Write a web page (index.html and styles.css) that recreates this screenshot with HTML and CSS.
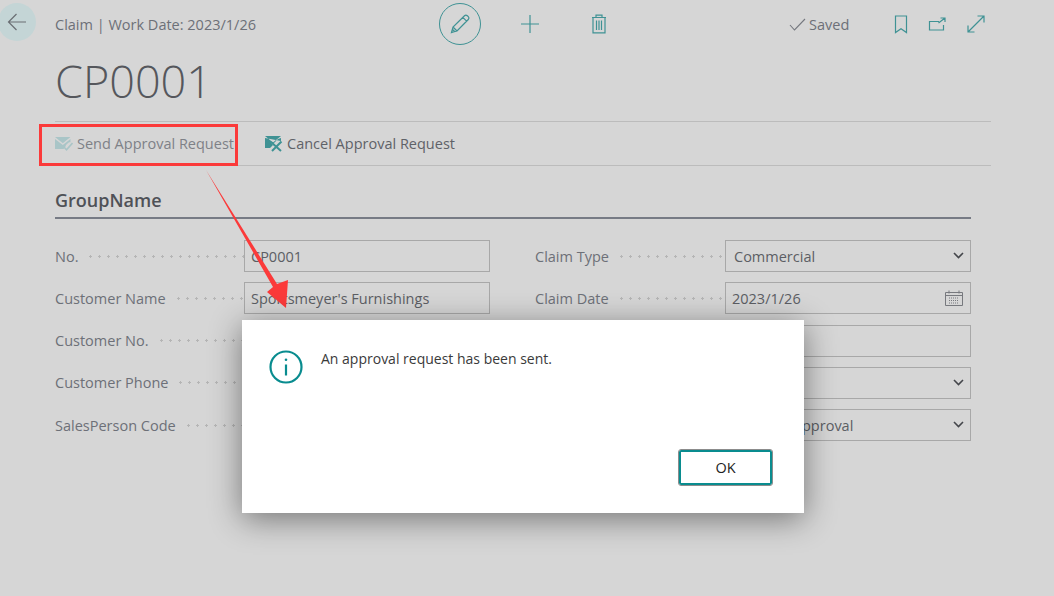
FILE: index.html
```html
<!DOCTYPE html>
<html lang="en">
<head>
  <meta charset="UTF-8" />
  <title>Claim CP0001</title>
  <link rel="stylesheet" href="styles.css">
</head>
<body>
  <div class="page">
    <header class="topbar">
      <button class="back-btn" aria-label="Back">
        <svg width="20" height="18" viewBox="0 0 20 18"><path d="M9.5 1 1.5 9l8 8M1.5 9H19" /></svg>
      </button>
      <div class="crumb">Claim | Work Date: 2023/1/26</div>
      <div class="tools">
        <button class="edit-btn" aria-label="Edit">
          <svg width="22" height="22" viewBox="0 0 22 22"><path d="M2.5 19.5 4 14 15.5 2.7a2 2 0 0 1 2.8 0l1 1a2 2 0 0 1 0 2.8L8 18zM4 14l4 4M13.8 4.4l3.8 3.8M2.5 19.5l1-3.2 2.2 2.2z" /></svg>
        </button>
        <span class="tool tool-plus">
          <svg width="20" height="20" viewBox="0 0 20 20"><path d="M10 1v18M1 10h18" /></svg>
        </span>
        <span class="tool tool-trash">
          <svg width="16" height="20" viewBox="0 0 16 20"><path d="M1 3.5h14M5 3.5V1.2h6v2.3M2 3.5v15.3h12V3.5M5.5 6.5v9.5M8 6.5v9.5M10.5 6.5v9.5" /></svg>
        </span>
      </div>
      <div class="status">
        <svg width="17" height="13" viewBox="0 0 17 13"><path d="M1 7l4.5 5L16 1" /></svg>
        <span>Saved</span>
      </div>
      <div class="page-icons">
        <svg width="14" height="19" viewBox="0 0 14 19"><path d="M1.5 1h11v16.5L7 13.8 1.5 17.5z" /></svg>
        <svg width="19" height="14" viewBox="0 0 19 14"><path d="M11 4.5H1.5v8.5h14V8M10.5 6 17 1M12.5 1H17v4" /></svg>
        <svg width="18" height="18" viewBox="0 0 18 18"><path d="M1 17 17 1M10.5 1H17v6.5M1 10.5V17h6.5" /></svg>
      </div>
    </header>

    <h1 class="title">CP0001</h1>

    <nav class="actions">
      <a class="action action-off">
        <svg width="18" height="15" viewBox="0 0 18 15"><path class="fill" d="M0 1h15.5L7.8 7.2zM0 3v10h8.5l2-2.6L11 9l3-2.8 1.5 0V3L7.8 9z" /><path class="tick" d="M8.5 10.5l3 3.2L17.5 7" /></svg>
        Send Approval Request
      </a>
      <a class="action">
        <svg width="18" height="17" viewBox="0 0 18 17"><path class="fill" d="M0 1h16L8 7.5zM0 3v10h5l3-3-2.5-2.5L8 9l5-5 3-1v3L0 3z" /><path class="cross" d="M6 7l10 9M16.5 6.5 7 16" /></svg>
        Cancel Approval Request
      </a>
    </nav>

    <section class="group">
      <h2>GroupName</h2>
      <div class="form-grid">
        <div class="field"><span class="label">No.</span><i class="dots"></i><div class="control">CP0001</div></div>
        <div class="field"><span class="label">Claim Type</span><i class="dots"></i><div class="control select">Commercial<svg class="chev" width="11" height="7" viewBox="0 0 11 7"><path d="M1 1l4.5 4.5L10 1" /></svg></div></div>

        <div class="field"><span class="label">Customer Name</span><i class="dots"></i><div class="control">Sportsmeyer's Furnishings</div></div>
        <div class="field"><span class="label">Claim Date</span><i class="dots"></i><div class="control">2023/1/26
          <svg class="cal" width="18" height="16" viewBox="0 0 18 16"><path d="M.5 2.5h17v13H.5zM.5 5.5h17M4 .5v3M14 .5v3" /><path class="cal-dots" d="M4 8h10M4 10.500h10M4 13h10" /></svg>
        </div></div>

        <div class="field"><span class="label">Customer No.</span><i class="dots"></i><div class="control"></div></div>
        <div class="field"><span class="label"></span><i class="dots"></i><div class="control"></div></div>

        <div class="field"><span class="label">Customer Phone</span><i class="dots"></i><div class="control"></div></div>
        <div class="field"><span class="label"></span><i class="dots"></i><div class="control select"><svg class="chev" width="11" height="7" viewBox="0 0 11 7"><path d="M1 1l4.5 4.500L10 1" /></svg></div></div>

        <div class="field"><span class="label">SalesPerson Code</span><i class="dots"></i><div class="control"></div></div>
        <div class="field"><span class="label"></span><i class="dots"></i><div class="control select">Pending Approval<svg class="chev" width="11" height="7" viewBox="0 0 11 7"><path d="M1 1l4.500 4.500L10 1" /></svg></div></div>
      </div>
    </section>
  </div>

  <!-- annotation drawn on the screenshot -->
  <div class="mark-box"></div>
  <svg class="mark-arrow" width="90" height="145" viewBox="0 0 90 145">
    <path d="M1 1 72 115 83 111 81 139 62 123 68 118z" />
  </svg>

  <!-- Message dialog -->
  <div class="dialog">
    <div class="dialog-body">
      <svg class="info" width="34" height="34" viewBox="0 0 34 34">
        <circle cx="17" cy="17" r="15.500" />
        <path d="M17 14.500v11" />
        <circle class="dot" cx="17" cy="9.800" r="1.300" />
      </svg>
      <p>An approval request has been sent.</p>
    </div>
    <div class="dialog-actions">
      <button class="ok-btn">OK</button>
    </div>
  </div>
</body>
</html>
```

FILE: styles.css
```css
:root {
  --bg: #d6d6d6;
  --teal: #3f9294;
  --text: #6d7078;
  --line: #bcbcbc;
  --red: #fb3a3a;
}

* {
  box-sizing: border-box;
}

html, body {
  height: 100%;
}

body {
  margin: 0;
  background: var(--bg);
  color: var(--text);
  font-family: 'Open Sans', 'Noto Sans', sans-serif;
  font-size: 14px;
  overflow: hidden;
}

button {
  font-family: inherit;
  cursor: pointer;
}

svg path {
  fill: none;
}

/* Top bar */
.topbar {
  display: flex;
  align-items: center;
  height: 46px;
  margin-left: -2px;
  padding-top: 2px;
}

.back-btn {
  display: flex;
  align-items: center;
  justify-content: center;
  flex: none;
  width: 38px;
  height: 38px;
  margin-top: -4px;
  padding: 0;
  border: none;
  border-radius: 50%;
  background: #c4d5d6;
}

.back-btn path {
  stroke: #6a6e73;
  stroke-width: 1.2;
}

.crumb {
  width: 384px;
  margin-left: 19px;
  font-size: 14.5px;
}

.tools {
  display: flex;
  align-items: center;
  width: 350px;
}

.edit-btn {
  display: flex;
  align-items: center;
  justify-content: center;
  width: 42px;
  height: 42px;
  padding: 0;
  border: 1.300px solid var(--teal);
  border-radius: 50%;
  background: transparent;
}

.topbar svg path {
  stroke: var(--teal);
  stroke-width: 1.200;
}

.back-btn svg path {
  stroke: #6a6e73;
}

.tool {
  display: flex;
}

.tool-plus {
  margin-left: 39px;
}

.tool-trash {
  margin-left: 51px;
}

.status {
  display: flex;
  align-items: center;
  gap: 3px;
  width: 105px;
  font-size: 14.500px;
}

.status svg path {
  stroke: #74777e;
  stroke-width: 1.100;
}

.page-icons {
  display: flex;
  align-items: center;
  gap: 20px;
}

/* Title */
.title {
  margin: 4px 0 0 55px;
  color: #55575c;
  font-size: 45px;
  font-weight: 300;
  line-height: 62px;
}

/* Action bar */
.actions {
  display: flex;
  align-items: center;
  gap: 31px;
  width: 936px;
  height: 45px;
  margin: 9px 0 0 55px;
  border-top: 1px solid var(--line);
  border-bottom: 1px solid var(--line);
  font-size: 14.500px;
}

.action {
  display: flex;
  align-items: center;
  gap: 4px;
  color: #5f6268;
}

.action-off {
  color: #7e8187;
}

.action .fill {
  fill: #3f9294;
}

.action-off .fill {
  fill: #a9c5c7;
}

.action .tick {
  stroke: #a9c5c7;
  stroke-width: 1.600;
}

.action .cross {
  stroke: #3f9294;
  stroke-width: 2;
}

/* Form */
.group {
  width: 916px;
  margin: 21px 0 0 55px;
}

.group h2 {
  margin: 0;
  padding-bottom: 3px;
  border-bottom: 2px solid #777b85;
  color: #4f5157;
  font-size: 18px;
  font-weight: 600;
  line-height: 27px;
}

.form-grid {
  display: grid;
  grid-template-columns: 435px 436px;
  column-gap: 45px;
  row-gap: 10.250px;
  margin-top: 21px;
}

.field {
  display: flex;
  align-items: center;
  height: 32px;
}

.label {
  flex: none;
  padding-right: 8px;
  font-size: 14.500px;
}

.dots {
  flex: 1;
  height: 3px;
  margin-right: 0;
  background: radial-gradient(circle, #b5b5b5 1px, transparent 1.200px) left center / 9px 3px repeat-x;
}

.control {
  position: relative;
  display: flex;
  align-items: center;
  flex: none;
  width: 246px;
  height: 32px;
  padding-left: 6px;
  border: 1px solid #a8a8a8;
  color: #5c5e64;
  font-size: 14.500px;
}

.select {
  padding-left: 8px;
}

.chev {
  position: absolute;
  right: 6px;
  top: 11px;
}

.chev path {
  stroke: #44464b;
  stroke-width: 1.600;
}

.cal {
  position: absolute;
  right: 7px;
  top: 7px;
}

.cal path {
  stroke: #77797e;
  stroke-width: 1;
}

.cal .cal-dots {
  stroke-dasharray: 1 1;
}

/* Annotation */
.mark-box {
  position: absolute;
  left: 39px;
  top: 124px;
  width: 199px;
  height: 42px;
  border: 3px solid var(--red);
}

.mark-arrow {
  position: absolute;
  left: 205px;
  top: 169px;
}

.mark-arrow path {
  fill: var(--red);
}

/* Dialog */
.dialog {
  position: absolute;
  left: 242px;
  top: 320px;
  display: flex;
  flex-direction: column;
  justify-content: space-between;
  width: 562px;
  height: 193px;
  background: #fff;
  box-shadow: 0 6px 30px rgba(0,0,0,0.45);
}

.dialog-body {
  display: flex;
  gap: 18px;
  padding: 30px 0 0 27px;
}

.dialog-body p {
  margin: 0;
  color: #3a3a3a;
  font-size: 14px;
  line-height: 18px;
}

.info circle {
  fill: none;
  stroke: #098c8f;
  stroke-width: 2.200;
}

.info path {
  stroke: #098c8f;
  stroke-width: 2.200;
}

.info .dot {
  fill: #098c8f;
  stroke: none;
}

.dialog-actions {
  display: flex;
  justify-content: flex-end;
  padding: 0 32px 28px 0;
}

.ok-btn {
  width: 93px;
  height: 35px;
  padding: 0;
  border: 2px solid #098c8f;
  border-radius: 2px;
  outline: 1px solid #8c8c8c;
  background: #fff;
  color: #222;
  font-size: 14.500px;
}
```
